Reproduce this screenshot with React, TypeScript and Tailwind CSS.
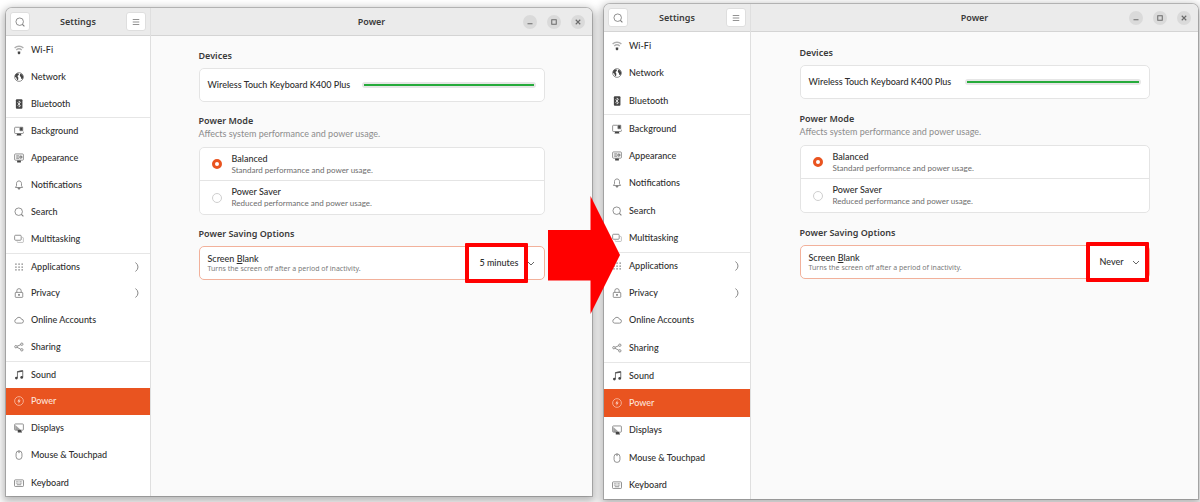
import { useId, useState } from "react";
import type { ReactNode } from "react";
import { clsx } from "clsx";

function Glyph({ children, className = "size-[10px]" }: { children: ReactNode; className?: string }) {
  return (
    <svg
      viewBox="0 0 16 16"
      fill="none"
      stroke="currentColor"
      strokeWidth="1.3"
      className={clsx("shrink-0", className)}
      aria-hidden="true"
    >
      {children}
    </svg>
  );
}

const searchShape = (
  <>
    <circle cx="7.5" cy="7.5" r="6" />
    <path d="M11.8 11.8 15 15" strokeWidth="1.8" />
  </>
);

const icons: Record<string, ReactNode> = {
  wifi: (
    <>
      <path d="M1 4.800a10.500 10.500 0 0 1 14 0" strokeWidth="2.400" opacity="0.6" />
      <path d="M3.600 8a6.600 6.600 0 0 1 8.800 0" strokeWidth="2.200" opacity="0.6" />
      <path d="M6 10.500h4v3L8 15l-2-1.500z" fill="#444" stroke="none" />
    </>
  ),
  network: (
    <>
      <circle cx="8" cy="8" r="7" />
      <path
        d="M2 4.500 5 2l3 .6-.5 2.200L5.500 6.500 7 9l-.6 4.600L4.500 12 3.800 9 1.500 7.500zM10 2.500l3.500 1.800L15 8l-1.500 3.500-2.200-1L11 8l-1.800-1.500z"
        fill="#444"
        stroke="none"
      />
    </>
  ),
  bluetooth: (
    <>
      <rect x="3" y="0.500" width="10.500" height="15" rx="1.500" fill="#444" stroke="none" />
      <path d="m5.500 5.500 5 5L8.200 13V3l2.300 2.500-5 5" stroke="#fff" strokeWidth="1.100" />
    </>
  ),
  background: (
    <>
      <path d="M9 2H2.200A1.200 1.200 0 0 0 1 3.200v7.600A1.200 1.200 0 0 0 2.200 12h11.600a1.200 1.200 0 0 0 1.200-1.200V9" />
      <path d="M9.500 2H14v5.500H9.500z" fill="#444" stroke="#777" />
      <path d="M5 12.500h6l1 2.500H4z" fill="#444" stroke="none" />
    </>
  ),
  appearance: (
    <>
      <rect x="1" y="1.500" width="14" height="10" rx="1.200" />
      <path d="M3.500 4.500h5M3.500 6.500h4M3.500 8.500h5" />
      <circle cx="11" cy="6.500" r="1.800" stroke="#444" />
      <path d="M5 12h6v3H5z" fill="#444" stroke="none" />
    </>
  ),
  notifications: (
    <>
      <path d="M8 1.500c-2.600 0-4 1.900-4 4.300v3.400L2.300 12h11.400L12 9.200V5.800c0-2.400-1.400-4.300-4-4.300z" />
      <path d="M6.300 13a1.700 1.700 0 0 0 3.400 0z" fill="currentColor" />
    </>
  ),
  search: searchShape,
  multitasking: (
    <>
      <rect x="1" y="2" width="10.500" height="8" rx="1.500" />
      <path
        d="M13 5.500h.8A1.300 1.300 0 0 1 15 6.800v5.400a1.300 1.300 0 0 1-1.200 1.300H6.500A1.500 1.500 0 0 1 5 12"
        opacity="0.55"
      />
    </>
  ),
  applications: (
    <path
      d="M2 3.500h2.200M7 3.500h2.200M12 3.500h2.200M2 8h2.200M7 8h2.200M12 8h2.200M2 12.500h2.200M7 12.500h2.200M12 12.500h2.200"
      strokeWidth="2"
    />
  ),
  privacy: (
    <>
      <rect x="2" y="7" width="12" height="8" rx="1" />
      <path d="M4.500 7V4.500a3.500 3.500 0 0 1 7 0V7" />
      <path d="M8 9.500v3M6.500 11h3" strokeWidth="1.600" />
    </>
  ),
  accounts: <path d="M4.300 13a3.300 3.300 0 0 1-.5-6.500A4.300 4.300 0 0 1 12 6.800 3.100 3.100 0 0 1 12 13z" />,
  sharing: (
    <>
      <circle cx="3" cy="7.500" r="1.900" />
      <circle cx="12.500" cy="3.500" r="1.900" />
      <circle cx="12.500" cy="12.500" r="1.900" />
      <path d="m4.800 6.800 6-2.500M4.800 8.500l6 3" />
    </>
  ),
  sound: (
    <g stroke="#555">
      <path d="M5.500 12.500V2.500L14 1v10.500" />
      <path d="M5.500 3 14 1.500" strokeWidth="2.400" />
      <circle cx="3.800" cy="12.800" r="2.200" fill="#444" stroke="none" />
      <circle cx="12.300" cy="11.800" r="2.200" fill="#444" stroke="none" />
    </g>
  ),
  power: (
    <>
      <circle cx="8" cy="8" r="7" strokeWidth="1.100" />
      <path d="M8.800 3.500 5.300 8.800h2.200l-.4 3.700 3.600-5.300H8.400z" fill="currentColor" stroke="none" />
    </>
  ),
  displays: (
    <>
      <rect x="1" y="1.500" width="14" height="10" rx="1.200" />
      <path d="M2 3v8h9z" fill="currentColor" opacity="0.7" stroke="none" />
      <path d="M6 11h5l2 4H6z" fill="#444" stroke="none" />
    </>
  ),
  mouse: (
    <>
      <rect x="3.300" y="1.500" width="9.400" height="13.500" rx="4.500" />
      <path d="M8 1v4" strokeWidth="1.600" />
    </>
  ),
  keyboard: (
    <>
      <rect x="0.800" y="3" width="14.400" height="10.500" rx="1.200" />
      <path d="M3 6h10M3 8.300h10" strokeDasharray="1.400 0.800" />
      <path d="M4.500 10.800h7" />
    </>
  ),
};

type Entry = { id: string; label: string; divided?: boolean; nested?: boolean };

const entries: Entry[] = [
  { id: "wifi", label: "Wi-Fi" },
  { id: "network", label: "Network" },
  { id: "bluetooth", label: "Bluetooth" },
  { id: "background", label: "Background", divided: true },
  { id: "appearance", label: "Appearance" },
  { id: "notifications", label: "Notifications" },
  { id: "search", label: "Search" },
  { id: "multitasking", label: "Multitasking" },
  { id: "applications", label: "Applications", divided: true, nested: true },
  { id: "privacy", label: "Privacy", nested: true },
  { id: "accounts", label: "Online Accounts" },
  { id: "sharing", label: "Sharing" },
  { id: "sound", label: "Sound", divided: true },
  { id: "power", label: "Power" },
  { id: "displays", label: "Displays" },
  { id: "mouse", label: "Mouse & Touchpad" },
  { id: "keyboard", label: "Keyboard" },
];

const heading = "font-['Noto_Sans',sans-serif] font-semibold text-[#3a3a3a]";

function HeaderButton({ label, children }: { label: string; children: ReactNode }) {
  return (
    <button
      type="button"
      aria-label={label}
      className="flex h-[19px] w-5 items-center justify-center rounded-[3px] border border-[#dedede] bg-white text-[#777]"
    >
      {children}
    </button>
  );
}

function WindowButton({ label, children }: { label: string; children: ReactNode }) {
  return (
    <button
      type="button"
      aria-label={label}
      className="flex size-[14px] items-center justify-center rounded-full bg-[#dadada] text-[#6a6a6a]"
    >
      <Glyph className="size-2">{children}</Glyph>
    </button>
  );
}

function Sidebar() {
  return (
    <nav className="flex grow flex-col bg-white">
      {entries.map((entry) => {
        const active = entry.id === "power";
        return (
          <a
            key={entry.id}
            href={`#${entry.id}`}
            aria-current={active ? "page" : undefined}
            className={clsx(
              "flex grow basis-[27px] items-center gap-[7px] pr-[11px] pl-2",
              active ? "bg-[#e95420] text-[#fbd0c0]" : "text-[#7a7a7a]",
              entry.divided && "border-t border-[#e6e6e6]",
            )}
          >
            <Glyph>{icons[entry.id]}</Glyph>
            <span className={clsx("grow font-medium", active ? "text-[#fde3da]" : "text-[#2e2e2e]")}>
              {entry.label}
            </span>
            {entry.nested && (
              <svg viewBox="0 0 4 10" fill="none" stroke="#888" className="h-[10px] w-1" aria-hidden="true">
                <path d="M.5.500Q3 2.500 3 5T.5 9.500" />
              </svg>
            )}
          </a>
        );
      })}
    </nav>
  );
}

type Size = {
  frame: string;
  side: string;
  body: string;
  column: string;
  mark: string;
};

function PowerPanel({ value, size }: { value: string; size: Size }) {
  const uid = useId();
  const [mode, setMode] = useState("balanced");
  const [blank, setBlank] = useState(value);
  const modes = [
    { id: "balanced", name: "Balanced", note: "Standard performance and power usage." },
    { id: "saver", name: "Power Saver", note: "Reduced performance and power usage." },
  ];

  return (
    <div className={clsx("mx-auto flex w-full flex-col", size.column)}>
      <section>
        <h2 className={heading}>Devices</h2>
        <div className="mt-1.5 flex h-[34px] items-center justify-between rounded-[5px] border border-[#e4e4e4] bg-white px-2">
          <span className="font-medium whitespace-nowrap">Wireless Touch Keyboard K400 Plus</span>
          <div
            role="meter"
            aria-label="Keyboard battery"
            aria-valuemin={0}
            aria-valuemax={100}
            aria-valuenow={100}
            className="w-[53%] rounded-[3px] bg-[#e6e6e6] p-0.5"
          >
            <div className="h-0.5 bg-[#26ab3b]" />
          </div>
        </div>
      </section>

      <section>
        <h2 className={heading}>Power Mode</h2>
        <p className="leading-[14px] text-[#8c8c8c]">Affects system performance and power usage.</p>
        <div className="mt-1.5 divide-y divide-[#e4e4e4] rounded-[5px] border border-[#e4e4e4] bg-white">
          {modes.map((m) => (
            <label key={m.id} className="flex h-[33px] items-center gap-[10px] pl-3">
              <input
                type="radio"
                name={`${uid}-mode`}
                checked={mode === m.id}
                onChange={() => setMode(m.id)}
                className="size-[10px] appearance-none rounded-full border border-[#cfcfcf] bg-white checked:border-[3px] checked:border-[#e95420]"
              />
              <span className="flex flex-col">
                <span className="font-medium">{m.name}</span>
                <span className="text-[8px] leading-[11px] text-[#6c6c6c]">{m.note}</span>
              </span>
            </label>
          ))}
        </div>
      </section>

      <section>
        <h2 className={heading}>Power Saving Options</h2>
        <div className="relative mt-1.5 flex h-[34px] items-center justify-between rounded-[5px] border border-[#f2b19b] bg-white pl-2">
          <label htmlFor={`${uid}-blank`} className="flex flex-col">
            <span className="leading-[10px] font-medium">
              Screen <u>B</u>lank
            </span>
            <span className="font-['Noto_Sans',sans-serif] text-[7px] leading-[9px] text-[#7a7a7a]">
              Turns the screen off after a period of inactivity.
            </span>
          </label>
          <div className="relative flex items-center">
            <select
              id={`${uid}-blank`}
              value={blank}
              onChange={(e) => setBlank(e.target.value)}
              className="h-5 appearance-none bg-transparent pr-[25px] pl-2 text-right font-medium [field-sizing:content]"
            >
              <option>5 minutes</option>
              <option>Never</option>
            </select>
            <svg
              viewBox="0 0 8 5"
              fill="none"
              stroke="#666"
              className="pointer-events-none absolute right-[9px] h-[5px] w-2"
              aria-hidden="true"
            >
              <path d="m1 1 3 3 3-3" />
            </svg>
          </div>
          <div
            className={clsx(
              "pointer-events-none absolute -top-1 -bottom-1 w-[63px] rounded-[1px] border-4 border-[#ff0000]",
              size.mark,
            )}
          />
        </div>
      </section>
    </div>
  );
}

function SettingsWindow({ value, size, children }: { value: string; size: Size; children?: ReactNode }) {
  return (
    <div className={clsx("relative flex", size.frame)}>
      <main className="flex grow overflow-hidden rounded-t-[6px] bg-[#fafafa] shadow-[0_0_0_1px_rgba(0,0,0,0.2),0_3px_9px_3px_rgba(0,0,0,0.28)]">
        <div className={clsx("flex shrink-0 flex-col border-r border-[#dfdfdf]", size.side)}>
          <header className="flex h-7 items-center justify-between border-b border-[#d4d4d4] bg-[#ebebeb] px-1">
            <HeaderButton label="Search">
              <Glyph>{searchShape}</Glyph>
            </HeaderButton>
            <h1 className={heading}>Settings</h1>
            <HeaderButton label="Menu">
              <Glyph className="size-2">
                <path d="M1.500 3h13M1.500 8h13M1.500 13h13" strokeWidth="1.600" />
              </Glyph>
            </HeaderButton>
          </header>
          <Sidebar />
        </div>
        <div className="flex grow flex-col">
          <header className="grid h-7 grid-cols-[1fr_auto_1fr] items-center border-b border-[#d4d4d4] bg-[#ebebeb] px-[7px]">
            <h2 className={clsx("col-start-2", heading)}>Power</h2>
            <div className="flex justify-end gap-[10px]">
              <WindowButton label="Minimize">
                <path d="M3 11.500h10" strokeWidth="2" />
              </WindowButton>
              <WindowButton label="Maximize">
                <rect x="3.500" y="3.500" width="9" height="9" strokeWidth="2" />
              </WindowButton>
              <WindowButton label="Close">
                <path d="m3.500 3.500 9 9m0-9-9 9" strokeWidth="2.200" />
              </WindowButton>
            </div>
          </header>
          <div className={size.body}>
            <PowerPanel value={value} size={size} />
          </div>
        </div>
      </main>
      {children}
    </div>
  );
}

const before: Size = {
  frame: "z-10 mt-2 mb-1.5",
  side: "w-[145px]",
  body: "pt-[14px]",
  column: "max-w-[346px] gap-[13px]",
  mark: "right-4",
};

const after: Size = {
  frame: "mt-1 mb-[3px]",
  side: "w-[147px]",
  body: "pt-[15px]",
  column: "max-w-[350px] gap-[14px]",
  mark: "right-0",
};

export default function App() {
  return (
    <div className="grid min-h-screen grid-cols-[586fr_594fr] gap-3 overflow-hidden bg-white pr-0.5 pl-1.5 font-['Lato',sans-serif] text-[9px] leading-3 text-[#2e2e2e]">
      <SettingsWindow value="5 minutes" size={before}>
        <svg
          viewBox="0 0 72 118"
          className="pointer-events-none absolute top-[188px] -right-7 h-[118px] w-[72px]"
          role="img"
          aria-label="Change to"
        >
          <path d="M0 34h42.500V0L72 59 42.500 118V84.500H0z" fill="#ff0000" />
        </svg>
      </SettingsWindow>
      <SettingsWindow value="Never" size={after} />
    </div>
  );
}
